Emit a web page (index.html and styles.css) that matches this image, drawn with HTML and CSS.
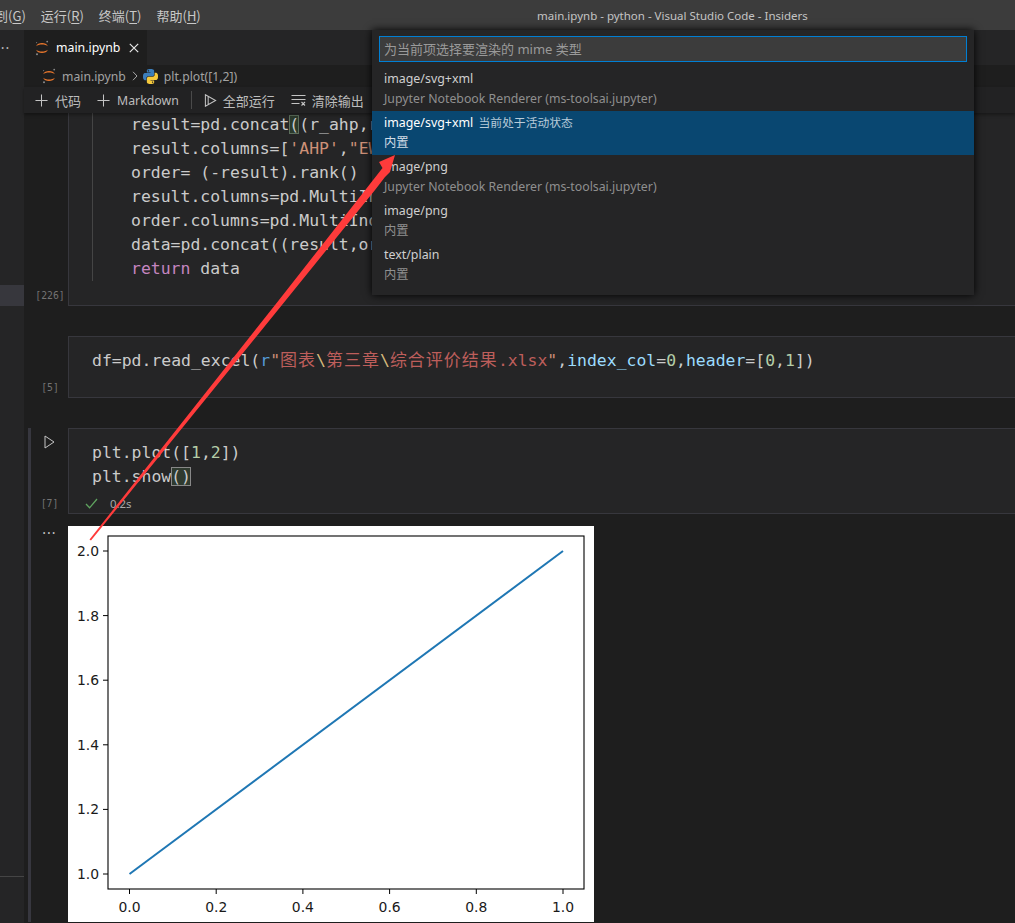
FILE: index.html
```html
<!DOCTYPE html>
<html lang="zh">
<head>
<meta charset="utf-8">
<title>main.ipynb - python - Visual Studio Code - Insiders</title>
<link rel="stylesheet" href="styles.css">
</head>
<body>
<svg class="defs" width="0" height="0" aria-hidden="true">
  <symbol id="jupyter" viewBox="0 0 16 16">
    <path d="M2.2 6.3C3.4 1.9 12.6 1.9 13.8 6.3C11.6 3.9 4.4 3.9 2.2 6.3Z" fill="#e8762c"/>
    <path d="M2.2 9.7C3.4 14.1 12.6 14.1 13.8 9.7C11.6 12.1 4.4 12.1 2.2 9.7Z" fill="#e8762c"/>
    <circle cx="13.2" cy="1.6" r=".9" fill="#8a8a8a"/>
    <circle cx="3" cy="14.2" r="1" fill="#8a8a8a"/>
    <circle cx="2.6" cy="2.6" r=".6" fill="#777"/>
  </symbol>
  <symbol id="python" viewBox="0 0 24 24">
    <path fill="#3c7ebb" fill-rule="evenodd" d="M14.25.18l.9.2.73.26.59.3.45.32.34.34.25.34.16.33.1.3.04.26.02.2-.01.13V8.5l-.05.63-.13.55-.21.46-.26.38-.3.31-.33.25-.35.19-.35.14-.33.1-.3.07-.26.04-.21.02H8.77l-.69.05-.59.14-.5.22-.41.27-.33.32-.27.35-.2.36-.15.37-.1.35-.07.32-.04.27-.02.21v3.06H3.17l-.21-.03-.28-.07-.32-.12-.35-.18-.36-.26-.36-.36-.35-.46-.32-.59-.28-.73-.21-.88-.14-1.05-.05-1.23.06-1.22.16-1.04.24-.87.32-.71.36-.57.4-.44.42-.33.42-.24.4-.16.36-.1.32-.05.24-.01h.16l.06.01h8.16v-.83H6.18l-.01-2.75-.02-.37.05-.34.11-.31.17-.28.25-.26.31-.23.38-.2.44-.18.51-.15.58-.12.64-.1.71-.06.77-.04.84-.02 1.27.05zM7.95 2.16l-.23.33-.08.41.08.41.23.34.33.22.41.09.41-.09.33-.22.23-.34.08-.41-.08-.41-.23-.33-.33-.22-.41-.09-.41.09z"/>
    <path fill="#f5c93c" fill-rule="evenodd" d="M21.04 6.11l.28.06.32.12.35.18.36.27.36.35.35.47.32.59.28.73.21.88.14 1.04.05 1.23-.06 1.23-.16 1.04-.24.86-.32.71-.36.57-.4.45-.42.33-.42.24-.4.16-.36.09-.32.05-.24.02-.16-.01h-8.22v.82h5.84l.01 2.76.02.36-.05.34-.11.31-.17.29-.25.25-.31.24-.38.2-.44.17-.51.15-.58.13-.64.09-.71.07-.77.04-.84.01-1.27-.04-1.07-.14-.9-.2-.73-.25-.59-.3-.45-.33-.34-.34-.25-.34-.16-.33-.1-.3-.04-.25-.02-.2.01-.13v-5.34l.05-.64.13-.54.21-.46.26-.38.3-.32.33-.24.35-.2.35-.14.33-.1.3-.06.26-.04.21-.02.13-.01h5.84l.69-.05.59-.14.5-.21.41-.28.33-.32.27-.35.2-.36.15-.36.1-.35.07-.32.04-.28.02-.21V6.07h2.09l.14.01zM14.57 20.36l-.23.33-.08.41.08.41.23.33.33.23.41.08.41-.08.33-.23.23-.33.08-.41-.08-.41-.23-.33-.33-.23-.41-.08-.41.08z"/>
  </symbol>
</svg>

<div class="window">
  <header class="titlebar">
    <nav class="menu">
      <span class="menu-item">转到(<u>G</u>)</span>
      <span class="menu-item">运行(<u>R</u>)</span>
      <span class="menu-item">终端(<u>T</u>)</span>
      <span class="menu-item">帮助(<u>H</u>)</span>
    </nav>
    <div class="window-title">main.ipynb - python - Visual Studio Code - Insiders</div>
  </header>

  <div class="workbench">
    <aside class="sidebar">
      <div class="sidebar-dots">···</div>
      <div class="sidebar-selected"></div>
      <div class="sidebar-divider"></div>
    </aside>

    <main class="editor">
      <div class="tabs">
        <div class="tab">
          <svg class="icon-file"><use href="#jupyter"/></svg>
          <span class="tab-name">main.ipynb</span>
          <svg class="tab-close" viewBox="0 0 10 10"><path d="M.8.8l8.4 8.4M9.2.8L.8 9.2"/></svg>
        </div>
      </div>

      <div class="breadcrumb">
        <svg class="icon-file"><use href="#jupyter"/></svg>
        <span>main.ipynb</span>
        <svg class="crumb-chevron" viewBox="0 0 6 10"><path d="M1 .8L5 5 1 9.2"/></svg>
        <svg class="icon-python"><use href="#python"/></svg>
        <span>plt.plot([1,2])</span>
      </div>

      <div class="toolbar">
        <div class="tool">
          <svg class="tool-icon" viewBox="0 0 14 14"><path d="M7 .5v13M.5 7h13"/></svg>
          <span class="tool-cjk">代码</span>
        </div>
        <div class="tool">
          <svg class="tool-icon" viewBox="0 0 14 14"><path d="M7 .5v13M.5 7h13"/></svg>
          <span>Markdown</span>
        </div>
        <div class="tool-sep"></div>
        <div class="tool tool-tight">
          <svg class="tool-icon" viewBox="0 0 14 14"><path d="M1.500 .8L12.500 7 1.500 13.200ZM4.500 2.500v9"/></svg>
          <span class="tool-cjk">全部运行</span>
        </div>
        <div class="tool tool-tight">
          <svg class="tool-icon tool-icon-wide" viewBox="0 0 15 12"><path d="M.5 1.500h14M.5 5.500h14M.5 9.500h8M10.500 8l3.500 3.500M14 8l-3.500 3.500"/></svg>
          <span class="tool-cjk">清除输出</span>
        </div>
      </div>

      <div class="notebook">
        <section class="cell cell-first">
          <div class="gutter"><span class="exec">[226]</span></div>
          <div class="cell-body">
            <div class="code code-first">
              <div class="indent">
                <div class="line indented">result=pd.concat<span class="match">(</span>(r_ahp,r_ewm,r_top),axis=1)</div>
                <div class="line indented">result.columns=[<span class="str">'AHP'</span>,<span class="str">"EWM"</span>,<span class="str">"TOPSIS"</span>]</div>
                <div class="line indented">order= (-result).rank()</div>
                <div class="line indented">result.columns=pd.MultiIndex.from_product()</div>
                <div class="line indented">order.columns=pd.MultiIndex.from_product()</div>
                <div class="line indented">data=pd.concat((result,order),axis=1)</div>
                <div class="line indented"><span class="kw">return</span> data</div>
              </div>
            </div>
          </div>
        </section>

        <section class="cell cell-second">
          <div class="gutter"><span class="exec">[5]</span></div>
          <div class="cell-body">
            <div class="code code-second">
              <div class="line">df=pd.read_excel(<span class="prefix">r</span><span class="str">"</span><span class="rx cjk">图表</span><span class="esc">\</span><span class="rx cjk">第三章</span><span class="esc">\</span><span class="rx cjk">综合评价结果</span><span class="rx">.xlsx</span><span class="str">"</span>,<span class="arg">index_col</span>=<span class="num">0</span>,<span class="arg">header</span>=[<span class="num">0</span>,<span class="num">1</span>])</div>
            </div>
          </div>
        </section>

        <div class="focus-group">
          <section class="cell cell-third">
            <div class="gutter">
              <svg class="run-icon" viewBox="0 0 11 14"><path d="M1 1l9 6-9 6Z"/></svg>
              <span class="exec">[7]</span>
            </div>
            <div class="cell-body">
              <div class="code code-third">
                <div class="line">plt.plot([<span class="num">1</span>,<span class="num">2</span>])</div>
                <div class="line">plt.show<span class="match-box">()</span></div>
              </div>
              <div class="status">
                <svg class="check" viewBox="0 0 13 11"><path d="M1 6l3.600 3.800L12 1"/></svg>
                <span>0.2s</span>
              </div>
            </div>
          </section>

          <section class="output">
            <div class="output-gutter">···</div>
            <div class="plot">
              <svg class="chart" viewBox="0 0 526 396" width="526" height="396">
                <rect x="40" y="10" width="476" height="353" class="axes"/>
                <path class="ticks" d="M61.500 363v5M148.200 363v5M234.900 363v5M321.600 363v5M408.300 363v5M495 363v5M40 348h-5M40 283.400h-5M40 218.800h-5M40 154.200h-5M40 89.600h-5M40 25h-5"/>
                <g class="xlab">
                  <text x="61.5" y="386">0.0</text><text x="148.2" y="386">0.2</text><text x="234.9" y="386">0.4</text><text x="321.6" y="386">0.6</text><text x="408.3" y="386">0.8</text><text x="495" y="386">1.0</text>
                </g>
                <g class="ylab">
                  <text x="31" y="353">1.0</text><text x="31" y="288.4">1.2</text><text x="31" y="223.8">1.4</text><text x="31" y="159.2">1.6</text><text x="31" y="94.6">1.8</text><text x="31" y="30">2.0</text>
                </g>
                <path class="series" d="M61.500 348L495 25"/>
              </svg>
            </div>
          </section>
        </div>
      </div>
    </main>
  </div>

  <div class="quickpick">
    <div class="qp-input">为当前项选择要渲染的 mime 类型</div>
    <div class="qp-list">
      <div class="qp-row"><div class="qp-label">image/svg+xml</div><div class="qp-desc">Jupyter Notebook Renderer (ms-toolsai.jupyter)</div></div>
      <div class="qp-row qp-active"><div class="qp-label">image/svg+xml <span class="qp-note">当前处于活动状态</span></div><div class="qp-desc">内置</div></div>
      <div class="qp-row"><div class="qp-label">image/png</div><div class="qp-desc">Jupyter Notebook Renderer (ms-toolsai.jupyter)</div></div>
      <div class="qp-row"><div class="qp-label">image/png</div><div class="qp-desc">内置</div></div>
      <div class="qp-row"><div class="qp-label">text/plain</div><div class="qp-desc">内置</div></div>
    </div>
  </div>

  <svg class="arrow" viewBox="0 0 1015 923" width="1015" height="923" aria-hidden="true">
    <path d="M395 155L379 162L382.500 168L279 300L89.500 539.500L91 540.500L286 300L375 190L385 177L390 172Z"/>
  </svg>
</div>
</body>
</html>
```
FILE: styles.css
```css
* { box-sizing: border-box; }
html, body { margin: 0; padding: 0; background: #1e1e1e; }
.defs { position: absolute; }

.window {
  position: relative;
  width: 1015px;
  height: 923px;
  overflow: hidden;
  display: flex;
  flex-direction: column;
  color: #ccc;
  font-family: "Noto Sans", "Noto Sans CJK SC", sans-serif;
  font-size: 12px;
}

/* title bar */
.titlebar {
  flex: 0 0 30px;
  display: flex;
  align-items: center;
  background: #3c3c3c;
  position: relative;
}
.menu {
  display: flex;
  gap: 15px;
  margin-left: -18px;
  font-family: "Noto Sans CJK SC", sans-serif;
  font-size: 13px;
  color: #c8c8c8;
}
.menu-item u { text-underline-offset: 2px; }
.window-title {
  position: absolute;
  left: 537px;
  font-size: 11.5px;
  color: #c4c4c4;
  white-space: nowrap;
}

/* layout */
.workbench { flex: 1; display: flex; min-height: 0; }
.sidebar {
  flex: 0 0 24px;
  background: #252526;
  display: flex;
  flex-direction: column;
}
.sidebar-dots {
  height: 20px;
  margin-left: -4px;
  color: #bbb;
  font-size: 14px;
  line-height: 36px;
  letter-spacing: 1px;
}
.sidebar-selected {
  height: 21px;
  margin-top: 235px;
  background: #37373d;
}
.sidebar-divider {
  margin-top: 570px;
  height: 1px;
  background: #454545;
}
.editor {
  flex: 1;
  min-width: 0;
  display: flex;
  flex-direction: column;
  background: #1e1e1e;
}

/* tabs */
.tabs { flex: 0 0 35px; background: #252526; display: flex; }
.tab {
  width: 123px;
  background: #1e1e1e;
  display: flex;
  align-items: center;
  padding-left: 10px;
}
.icon-file { width: 16px; height: 16px; flex: none; }
.tab-name { margin-left: 6px; color: #fff; font-size: 12.3px; }
.tab-close {
  width: 10px;
  height: 10px;
  margin-left: 9px;
  stroke: #e8e8e8;
  stroke-width: 1.2;
  fill: none;
}

/* breadcrumb */
.breadcrumb {
  flex: 0 0 22px;
  background: #1e1e1e;
  display: flex;
  align-items: center;
  padding-left: 17px;
  color: #a3a3a3;
  font-size: 12.2px;
}
.breadcrumb .icon-file { margin-right: 5px; }
.crumb-chevron {
  width: 6px;
  height: 10px;
  margin: 0 5px 0 6px;
  stroke: #a8a8a8;
  stroke-width: 1;
  fill: none;
}
.icon-python { width: 15px; height: 15px; margin-right: 6px; }

/* toolbar */
.toolbar {
  flex: 0 0 26px;
  background: #222223;
  display: flex;
  align-items: center;
  padding-left: 11px;
  gap: 16px;
  color: #bdbdbd;
  box-shadow: 0 2px 3px rgba(0,0,0,.35);
  position: relative;
  z-index: 1;
  font-size: 12.3px;
}
.tool { display: flex; align-items: center; gap: 7px; }
.tool-tight { gap: 6px; }
.tool-icon {
  width: 13px;
  height: 13px;
  stroke: #c4c4c4;
  stroke-width: 1.1;
  fill: none;
}
.tool-icon-wide { width: 15px; height: 12px; }
.tool-cjk { font-family: "Noto Sans CJK SC", sans-serif; font-size: 13px; }
.tool-sep { width: 1px; height: 18px; background: #4a4a4a; margin: 0 -4px; }

/* notebook */
.notebook { flex: 1; min-height: 0; overflow: hidden; }
.cell { display: grid; grid-template-columns: 44px 1fr; }
.cell-second { margin-top: 30px; }
.gutter {
  display: flex;
  flex-direction: column;
  justify-content: flex-end;
  align-items: center;
  padding-left: 8px;
  padding-bottom: 3px;
}
.exec {
  font-family: "DejaVu Sans Mono", monospace;
  font-size: 9.8px;
  line-height: 14px;
  color: #737373;
}
.cell-body {
  background: #252526;
  border: 1px solid #37373d;
  margin-right: -2px;
  min-width: 0;
}
.cell-first .cell-body { border-top: 0; }
.code {
  font-family: "DejaVu Sans Mono", "Noto Sans CJK SC", monospace;
  font-size: 16.45px;
  line-height: 24px;
  color: #cbcbcb;
  padding-left: 23px;
}
.code-first { padding-bottom: 24px; }
.code-second { padding-top: 12px; padding-bottom: 24px; }
.code-third { padding-top: 12px; }
.indent { border-left: 1px solid #454545; }
.indented { padding-left: 38px; }
.line { height: 24px; white-space: pre; }
.match { outline: 1px solid #5c6e5c; outline-offset: -1px; background: #2c3a2c; }
.match-box { outline: 1px solid #888; outline-offset: -1px; background: #2f3a2f; }
.str { color: #ce9178; }
.rx { color: #bd5e5b; }
.esc { color: #d7ba7d; }
.prefix { color: #569cd6; }
.num { color: #b5cea8; }
.arg { color: #9cdcfe; }
.kw { color: #c586c0; }
.cjk { font-family: "Noto Sans CJK SC", sans-serif; font-size: 17px; letter-spacing: 1px; line-height: 20px; }

.focus-group {
  margin-top: 30px;
  margin-left: 4px;
  border-left: 3px solid #37373f;
}
.cell-third { grid-template-columns: 37px 1fr; }
.cell-third .gutter { justify-content: space-between; padding-left: 0; padding-bottom: 3px; }
.run-icon {
  width: 11px;
  height: 14px;
  margin-top: 7px;
  stroke: #c5c5c5;
  stroke-width: 1;
  fill: none;
}
.status {
  display: flex;
  align-items: center;
  gap: 12px;
  height: 24px;
  padding: 5px 0 0 16px;
  font-size: 11.4px;
  color: #a8a8a8;
}
.check {
  width: 13px;
  height: 11px;
  stroke: #5fa35f;
  stroke-width: 1.3;
  fill: none;
}
.output { display: grid; grid-template-columns: 37px 526px; margin-top: 12px; }
.output-gutter {
  font-size: 14px;
  line-height: 14px;
  letter-spacing: 1px;
  color: #c5c5c5;
  text-align: center;
}
.plot { background: #fff; height: 396px; }
.chart { display: block; }
.axes { fill: #fff; stroke: #000; stroke-width: 1.1; }
.ticks { stroke: #000; stroke-width: 1; fill: none; }
.chart text { font-family: "DejaVu Sans", sans-serif; font-size: 13.9px; fill: #1a1a1a; }
.xlab text { text-anchor: middle; }
.ylab text { text-anchor: end; }
.series { stroke: #1f77b4; stroke-width: 2; fill: none; }

/* quick pick */
.quickpick {
  position: absolute;
  left: 372px;
  top: 30px;
  width: 602px;
  height: 265px;
  background: #252526;
  box-shadow: 0 0 8px #000;
  padding-top: 6px;
  z-index: 5;
}
.qp-input {
  margin: 0 7px 0 7px;
  height: 26px;
  border: 1px solid #007fd4;
  background: #3c3c3c;
  color: #9a9a9a;
  padding-left: 4px;
  font-size: 13px;
  line-height: 25px;
}
.qp-list { margin-top: 5px; }
.qp-row { height: 44px; padding: 2px 12px 0; }
.qp-label { height: 20px; line-height: 20px; color: #cfcfcf; font-size: 12.4px; }
.qp-desc { height: 20px; line-height: 20px; color: #8f8f8f; font-size: 12.3px; }
.qp-active { background: #094771; }
.qp-active .qp-label { color: #fff; }
.qp-active .qp-desc { color: #d0dce6; }
.qp-note { font-size: 11.8px; line-height: 1; margin-left: 2px; color: #b8cbd9; }

/* annotation */
.arrow { position: absolute; left: 0; top: 0; z-index: 6; pointer-events: none; }
.arrow path { fill: #ff3b3b; }
```
